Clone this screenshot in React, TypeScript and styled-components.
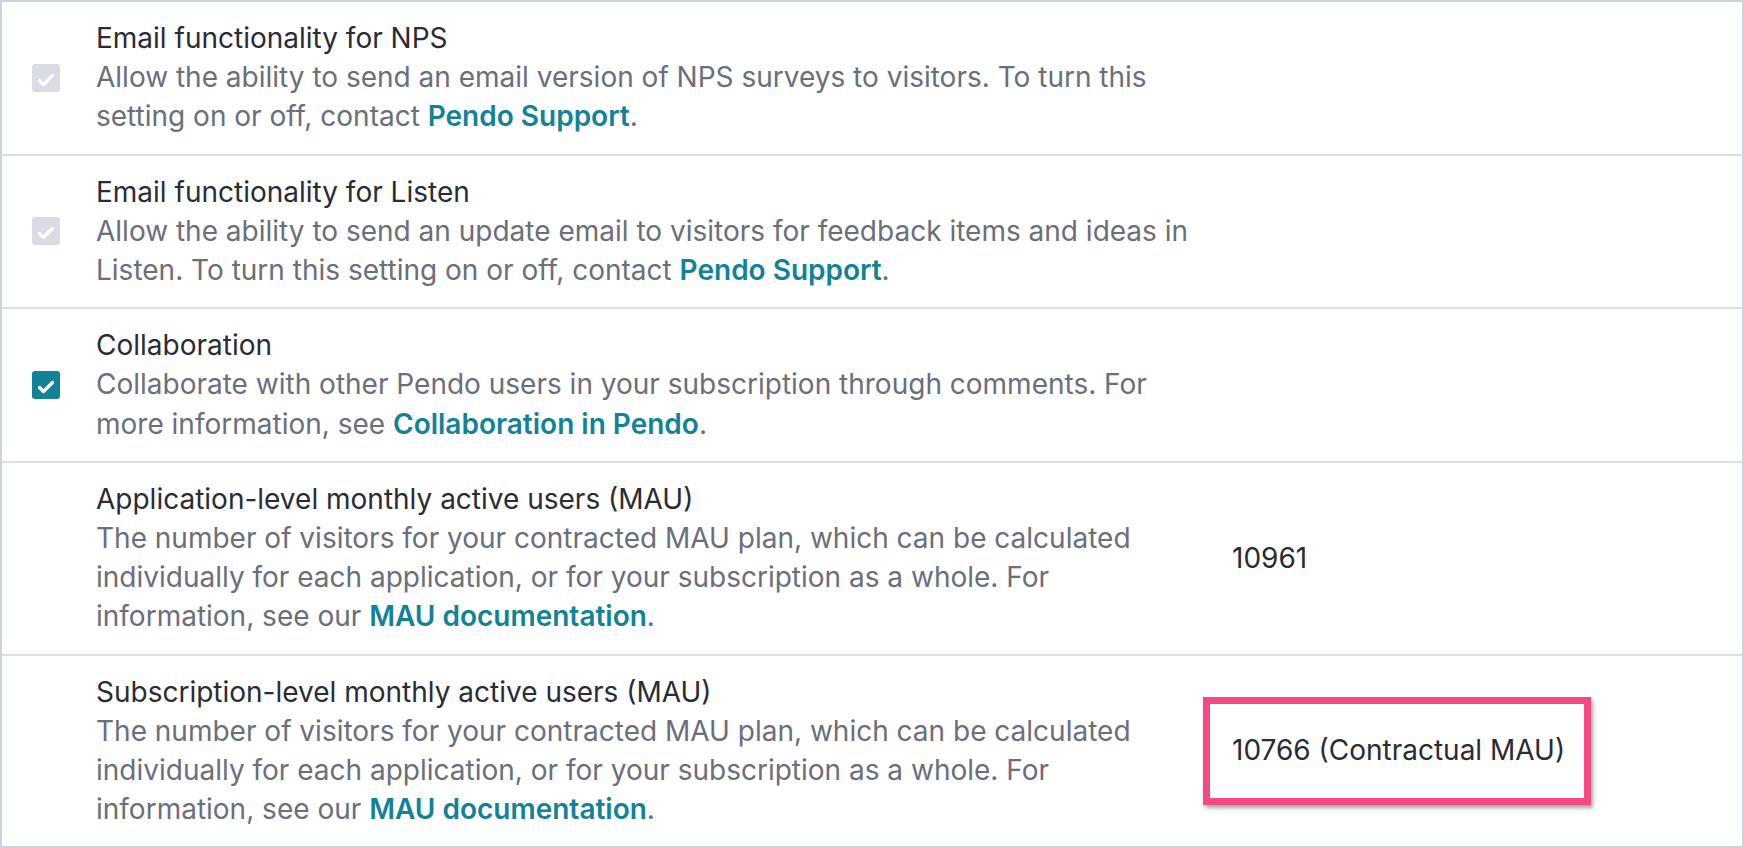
import styled, { createGlobalStyle } from 'styled-components'

const GlobalStyle = createGlobalStyle`
  html, body {
    margin: 0;
    padding: 0;
    background: #ffffff;
  }
  body {
    font-family: Inter, "Noto Sans", "Liberation Sans", sans-serif;
  }
`

type Setting = {
  title: string
  before: string
  link: string
  check?: 'disabled' | 'on'
  value?: string
  highlight?: boolean
}

const settings: Setting[] = [
  {
    title: 'Email functionality for NPS',
    before:
      'Allow the ability to send an email version of NPS surveys to visitors. To turn this setting on or off, contact ',
    link: 'Pendo Support',
    check: 'disabled',
  },
  {
    title: 'Email functionality for Listen',
    before:
      'Allow the ability to send an update email to visitors for feedback items and ideas in Listen. To turn this setting on or off, contact ',
    link: 'Pendo Support',
    check: 'disabled',
  },
  {
    title: 'Collaboration',
    before:
      'Collaborate with other Pendo users in your subscription through comments. For more information, see ',
    link: 'Collaboration in Pendo',
    check: 'on',
  },
  {
    title: 'Application-level monthly active users (MAU)',
    before:
      'The number of visitors for your contracted MAU plan, which can be calculated individually for each application, or for your subscription as a whole. For information, see our ',
    link: 'MAU documentation',
    value: '10961',
  },
  {
    title: 'Subscription-level monthly active users (MAU)',
    before:
      'The number of visitors for your contracted MAU plan, which can be calculated individually for each application, or for your subscription as a whole. For information, see our ',
    link: 'MAU documentation',
    value: '10766 (Contractual MAU)',
    highlight: true,
  },
]

function CheckBox({ state }: { state: 'disabled' | 'on' }) {
  return (
    <Box $on={state === 'on'}>
      <svg width="28" height="28" viewBox="0 0 28 28" fill="none">
        <path
          d="M7.5 16.5l4 4 9-9"
          stroke="#ffffff"
          strokeWidth={3.2}
          strokeLinecap="round"
          strokeLinejoin="round"
        />
      </svg>
    </Box>
  )
}

export default function App() {
  return (
    <>
      <GlobalStyle />
      <Frame>
        {settings.map((s) => (
          <Row key={s.title}>
            <CheckCell>{s.check && <CheckBox state={s.check} />}</CheckCell>
            <TextCell>
              <Title>{s.title}</Title>
              <Desc>
                {s.before}
                <Link href="#">{s.link}</Link>.
              </Desc>
            </TextCell>
            <ValueCell>
              {s.value && (
                <Value>
                  {s.value}
                  {s.highlight && <Highlight />}
                </Value>
              )}
            </ValueCell>
          </Row>
        ))}
      </Frame>
    </>
  )
}

const Frame = styled.div`
  box-sizing: border-box;
  width: 1744px;
  height: 848px;
  border: 2px solid #c9d5df;
  display: flex;
  flex-direction: column;
  overflow: hidden;
`

const Row = styled.div`
  display: flex;
  align-items: center;
  padding: 17px 0;
  border-bottom: 2px solid #dcdee5;
  font-size: 28px;
  line-height: 39.2px;

  &:last-child {
    border-bottom: none;
  }
`

const CheckCell = styled.div`
  width: 94px;
  flex-shrink: 0;
  box-sizing: border-box;
  padding-left: 30px;
  display: flex;
  align-items: center;
`

const Box = styled.div<{ $on: boolean }>`
  width: 28px;
  height: 28px;
  border-radius: 3px;
  background: ${(p) => (p.$on ? '#128297' : '#dadce5')};
  display: flex;
  align-items: center;
  justify-content: center;
`

const TextCell = styled.div`
  width: 1106px;
  flex-shrink: 0;
`

const Title = styled.div`
  color: #2a2c35;
`

const Desc = styled.div`
  color: #6b6e7b;
`

const Link = styled.a`
  color: #128297;
  font-weight: 600;
  text-decoration: none;
`

const ValueCell = styled.div`
  flex: 1;
  padding-left: 30px;
  color: #2a2c35;
`

const Value = styled.span`
  position: relative;
  display: inline-block;
`

const Highlight = styled.span`
  position: absolute;
  left: -29px;
  right: -26px;
  top: -34px;
  bottom: -34px;
  border: 7px solid #f34a82;
  box-shadow: 2px 3px 4px rgba(0, 0, 0, 0.35);
`
